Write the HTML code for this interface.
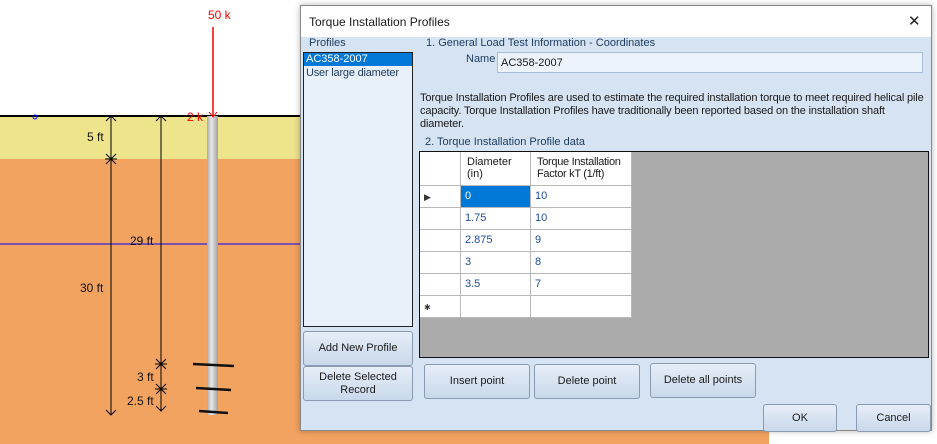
<!DOCTYPE html>
<html><head><style>
*{margin:0;padding:0;box-sizing:border-box}
body{width:937px;height:444px;position:relative;overflow:hidden;background:#fff;font-family:"Liberation Sans",sans-serif;font-size:11px;color:#1a1a1a}
.a{position:absolute;white-space:nowrap}
.btn{position:absolute;border:1px solid #8a9ab0;border-radius:3px;background:linear-gradient(#e6eef8,#c9d8ea);display:flex;align-items:center;justify-content:center;text-align:center;font-size:11px;color:#1a1a1a;line-height:13px}
.cell{position:absolute;background:#fff;border-right:1px solid #b8b8b8;border-bottom:1px solid #b8b8b8;padding:4px 4px;color:#1f4fa0;white-space:nowrap;font-size:11px}
</style></head><body>
<svg class="a" style="left:0;top:0" width="937" height="444">
<rect x="0" y="116" width="769" height="43" fill="#ede48c"/>
<rect x="0" y="159" width="769" height="285" fill="#f2a35f"/>
<line x1="0" y1="244" x2="300" y2="244" stroke="#0000ff" stroke-width="1"/>
<line x1="0" y1="116" x2="300" y2="116" stroke="#000" stroke-width="2"/>
<circle cx="35" cy="117" r="2" fill="none" stroke="#00f"/>
<defs><linearGradient id="g" x1="0" x2="1"><stop offset="0" stop-color="#a8a8a8"/><stop offset=".4" stop-color="#e8e8e8"/><stop offset="1" stop-color="#a0a0a0"/></linearGradient></defs>
<rect x="207" y="116" width="11" height="299" fill="url(#g)"/>
<line x1="213" y1="27" x2="213" y2="116" stroke="#f00" stroke-width="1.5"/>
<path d="M209 112 L213 117 L217 112" stroke="#f00" fill="none"/>
<text x="208" y="19" fill="#f00" font-size="12">50 k</text>
<text x="187" y="121" fill="#f00" font-size="12">2 k</text>
<g stroke="#000" stroke-width="1" fill="none">
<line x1="111" y1="116" x2="111" y2="415"/>
<line x1="161" y1="116" x2="161" y2="411"/>
<path d="M106 121 L111 116 L116 121 M156 121 L161 116 L166 121"/>
<path d="M106 154 L116 164 M106 164 L116 154 M105 159 L117 159"/>
<path d="M106 410 L111 415 L116 410 M156 406 L161 411 L166 406"/>
<path d="M156 359 L166 369 M156 369 L166 359 M155 364 L167 364"/>
<path d="M156 384 L166 394 M156 394 L166 384 M155 389 L167 389"/>
</g>
<g stroke="#111" stroke-width="2.5"><line x1="193" y1="364" x2="234" y2="366"/><line x1="196" y1="388" x2="231" y2="390"/><line x1="199" y1="411" x2="228" y2="413"/></g>
<g font-size="12" fill="#111"><text x="87" y="141">5 ft</text><text x="80" y="292">30 ft</text><text x="130" y="245">29 ft</text><text x="137" y="381">3 ft</text><text x="127" y="405">2.5 ft</text></g>
</svg>
<div class="a" style="left:300px;top:5px;width:632px;height:426px;background:#d5e3f2;border:1px solid #888;box-shadow:0 0 6px rgba(0,0,0,.3)">
 <div class="a" style="left:0;top:0;width:630px;height:31px;background:#fff"></div>
 <div class="a" style="left:8px;top:9px;font-size:12px">Torque Installation Profiles</div>
 <div class="a" style="left:607px;top:6px;font-size:15px;color:#222">✕</div>
</div>
<div class="a" style="left:309px;top:37px;color:#1e3a5f">Profiles</div>
<div class="a" style="left:303px;top:52px;width:110px;height:275px;background:#e8f0fa;border:1px solid #222"></div>
<div class="a" style="left:304px;top:53px;width:108px;height:13px;background:#0078d7;color:#fff;padding-left:2px;line-height:13px">AC358-2007</div>
<div class="a" style="left:306px;top:67px;color:#1e3a5f;letter-spacing:-0.2px">User large diameter</div>
<div class="btn" style="left:303px;top:331px;width:110px;height:35px">Add New Profile</div>
<div class="btn" style="left:303px;top:366px;width:110px;height:35px">Delete Selected<br>Record</div>
<div class="a" style="left:426px;top:37px;color:#1e3a5f">1. General Load Test Information - Coordinates</div>
<div class="a" style="left:466px;top:53px;color:#1e3a5f">Name</div>
<div class="a" style="left:497px;top:52px;width:426px;height:21px;background:#ecf3fb;border:1px solid #a9bdd6;padding:4px 3px;color:#1a1a1a">AC358-2007</div>
<div class="a" style="left:420px;top:92px;width:510px;line-height:13px;white-space:normal;letter-spacing:-0.15px">Torque Installation Profiles are used to estimate the required installation torque to meet required helical pile capacity. Torque Installation Profiles have traditionally been reported based on the installation shaft diameter.</div>
<div class="a" style="left:425px;top:136px;color:#1e3a5f">2. Torque Installation Profile data</div>
<div class="a" style="left:419px;top:151px;width:510px;height:207px;background:#ababab;border:1px solid #111"></div>
<div class="cell" style="left:420px;top:152px;width:41px;height:34px"></div>
<div class="cell" style="left:461px;top:152px;width:70px;height:34px;color:#1a1a1a;line-height:12px;padding-left:6px">Diameter<br>(in)</div>
<div class="cell" style="left:531px;top:152px;width:101px;height:34px;color:#1a1a1a;line-height:12px;letter-spacing:-0.3px;padding-left:6px">Torque Installation<br>Factor kT (1/ft)</div>
<div class="cell" style="left:420px;top:186px;width:41px;height:22px;color:#333;font-size:9px;padding-top:6px">▶</div>
<div class="cell" style="left:461px;top:186px;width:70px;height:22px;background:#0078d7;color:#fff">0</div>
<div class="cell" style="left:531px;top:186px;width:101px;height:22px">10</div>
<div class="cell" style="left:420px;top:208px;width:41px;height:22px"></div><div class="cell" style="left:461px;top:208px;width:70px;height:22px">1.75</div><div class="cell" style="left:531px;top:208px;width:101px;height:22px">10</div>
<div class="cell" style="left:420px;top:230px;width:41px;height:22px"></div><div class="cell" style="left:461px;top:230px;width:70px;height:22px">2.875</div><div class="cell" style="left:531px;top:230px;width:101px;height:22px">9</div>
<div class="cell" style="left:420px;top:252px;width:41px;height:22px"></div><div class="cell" style="left:461px;top:252px;width:70px;height:22px">3</div><div class="cell" style="left:531px;top:252px;width:101px;height:22px">8</div>
<div class="cell" style="left:420px;top:274px;width:41px;height:22px"></div><div class="cell" style="left:461px;top:274px;width:70px;height:22px">3.5</div><div class="cell" style="left:531px;top:274px;width:101px;height:22px">7</div>
<div class="cell" style="left:420px;top:296px;width:41px;height:22px;color:#333;font-size:8px;padding-top:7px">✱</div><div class="cell" style="left:461px;top:296px;width:70px;height:22px"></div><div class="cell" style="left:531px;top:296px;width:101px;height:22px"></div>
<div class="btn" style="left:424px;top:364px;width:106px;height:35px">Insert point</div>
<div class="btn" style="left:534px;top:364px;width:106px;height:35px">Delete point</div>
<div class="btn" style="left:650px;top:363px;width:106px;height:35px">Delete all points</div>
<div class="btn" style="left:763px;top:404px;width:74px;height:28px">OK</div>
<div class="btn" style="left:856px;top:404px;width:75px;height:28px">Cancel</div>
</body></html>
